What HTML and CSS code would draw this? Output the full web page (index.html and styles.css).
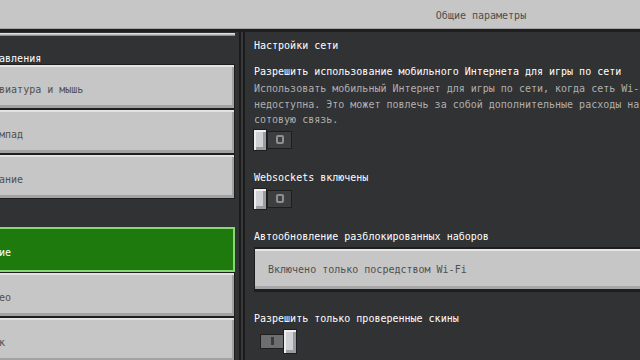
FILE: index.html
```html
<html lang="ru">
<head>
  <meta charset="UTF-8">
  <meta name="viewport" content="width=device-width, initial-scale=1.0">
  <title>Общие параметры</title>
  <link rel="stylesheet" href="styles.css">
</head>
<body>
  <div class="screen">
    <header class="topbar">
      <div class="topbar-side"></div>
      <div class="topbar-title">Общие параметры</div>
    </header>

    <div class="main">
      <nav class="sidebar">
        <div class="sidebar-strip"></div>
        <div class="nav-heading">Управления</div>
        <div class="nav-btn">Клавиатура и мышь</div>
        <div class="nav-btn">Геймпад</div>
        <div class="nav-btn">Касание</div>
        <div class="nav-gap"></div>
        <div class="nav-btn nav-btn-active">Общие</div>
        <div class="nav-btn">Видео</div>
        <div class="nav-btn">Звук</div>
      </nav>

      <div class="divider"></div>

      <section class="content">
        <div class="section-title">Настройки сети</div>

        <div class="setting">
          <div class="setting-title">Разрешить использование мобильного Интернета для игры по сети</div>
          <div class="setting-desc">Использовать мобильный Интернет для игры по сети, когда сеть Wi-Fi<br>недоступна. Это может повлечь за собой дополнительные расходы на<br>сотовую связь.</div>
          <div class="toggle toggle-first">
            <span class="knob"></span>
            <span class="track"><span class="track-o"></span></span>
          </div>
        </div>

        <div class="setting">
          <div class="setting-title">Websockets включены</div>
          <div class="toggle">
            <span class="knob"></span>
            <span class="track"><span class="track-o"></span></span>
          </div>
        </div>

        <div class="setting">
          <div class="setting-title">Автообновление разблокированных наборов</div>
          <div class="dropdown">Включено только посредством Wi-Fi</div>
        </div>

        <div class="setting">
          <div class="setting-title">Разрешить только проверенные скины</div>
          <div class="toggle toggle-on">
            <span class="track"><span class="track-i"></span></span>
            <span class="knob"></span>
          </div>
        </div>
      </section>
    </div>
  </div>
</body>
</html>
```

FILE: styles.css
```css
body {
  margin: 0;
  width: 640px;
  height: 360px;
  overflow: hidden;
  background: #313233;
  font-family: "DejaVu Sans Mono", "Liberation Mono", monospace;
  font-size: 10px;
}
.screen {
  width: 640px;
  height: 360px;
  overflow: hidden;
}
.topbar {
  display: flex;
  height: 29px;
  background: #c6c6c6;
  border-bottom: 3px solid #1e1e1f;
  box-shadow: inset 0 -1px 0 #a3a3a3;
  overflow: hidden;
}
.topbar-side {
  width: 245px;
  flex: none;
}
.topbar-title {
  width: 472px;
  flex: none;
  text-align: center;
  line-height: 32px;
  color: #4e4e4e;
}
.main {
  display: flex;
  height: 328px;
}
.sidebar {
  width: 239px;
  flex: none;
  background: #313233;
}
.sidebar-strip {
  width: 235px;
  height: 3px;
  margin-top: 1px;
  background: #c0c0c0;
  box-shadow: inset 0 1px 0 #dedede, inset 0 -1px 0 #8e8e8e;
}
.nav-heading {
  margin: 17px 0 0 -40px;
  padding-left: 21px;
  line-height: 11px;
  color: #ffffff;
  white-space: nowrap;
}
.nav-btn {
  box-sizing: border-box;
  width: 275px;
  height: 45px;
  margin-left: -40px;
  padding: 5px 0 0 20px;
  border: 1px solid #1e1e1f;
  background: #c6c6c6;
  box-shadow: inset 0 2px 0 #e2e2e2, inset -2px -3px 0 #a2a2a2;
  color: #505050;
  display: flex;
  align-items: center;
  white-space: nowrap;
}
.nav-gap {
  height: 28px;
}
.nav-btn-active {
  border: 2px solid #86d877;
  padding-left: 19px;
  background: #1e7a0c;
  box-shadow: none;
  color: #ffffff;
}
.divider {
  width: 6px;
  flex: none;
  background: linear-gradient(to right, #1b1b1c 0 2px, #38393b 2px 4px, #1b1b1c 4px 6px);
}
.content {
  flex: 1;
  min-width: 0;
  overflow: hidden;
  padding: 6px 0 0 9px;
  white-space: nowrap;
  color: #ffffff;
}
.section-title {
  line-height: 16px;
  margin-bottom: 10px;
}
.setting {
  margin-bottom: 19px;
}
.setting-title {
  line-height: 16px;
}
.setting-desc {
  margin-top: 1px;
  line-height: 15.5px;
  color: #b0b0b0;
}
.toggle {
  display: flex;
  align-items: center;
  height: 22px;
  margin: 2px 0 0 -1px;
}
.toggle-first {
  margin-top: 1px;
}
.knob {
  box-sizing: border-box;
  width: 14px;
  height: 22px;
  border: 1px solid #1e1e1f;
  background: #d0d1d4;
  box-shadow: inset 2px 2px 0 #eeeeee, inset -3px -3px 0 #9b9c9e;
  position: relative;
  z-index: 1;
}
.track {
  box-sizing: border-box;
  width: 25px;
  height: 18px;
  border: 1px solid #1e1e1f;
  background: #3d3e40;
  display: flex;
  align-items: center;
  justify-content: center;
}
.track-o {
  box-sizing: border-box;
  width: 8px;
  height: 9px;
  border: 2px solid #8e8f91;
  border-radius: 2px;
}
.toggle-on {
  height: 25px;
  margin-left: 6px;
}
.toggle-on .track {
  height: 15px;
  background: #6d6e70;
}
.toggle-on .knob {
  height: 25px;
  margin-left: -2px;
}
.track-i {
  width: 3px;
  height: 8px;
  background: #3b3b3c;
}
.dropdown {
  box-sizing: border-box;
  width: 460px;
  height: 45px;
  margin-top: 2px;
  padding: 2px 0 0 13px;
  border-style: solid;
  border-color: #1e1e1f;
  border-width: 2px 1px 3px 1px;
  background: #c6c6c6;
  box-shadow: inset 0 2px 0 #e6e6e6, inset 0 -3px 0 #a6a6a6;
  color: #505050;
  display: flex;
  align-items: center;
}
```
